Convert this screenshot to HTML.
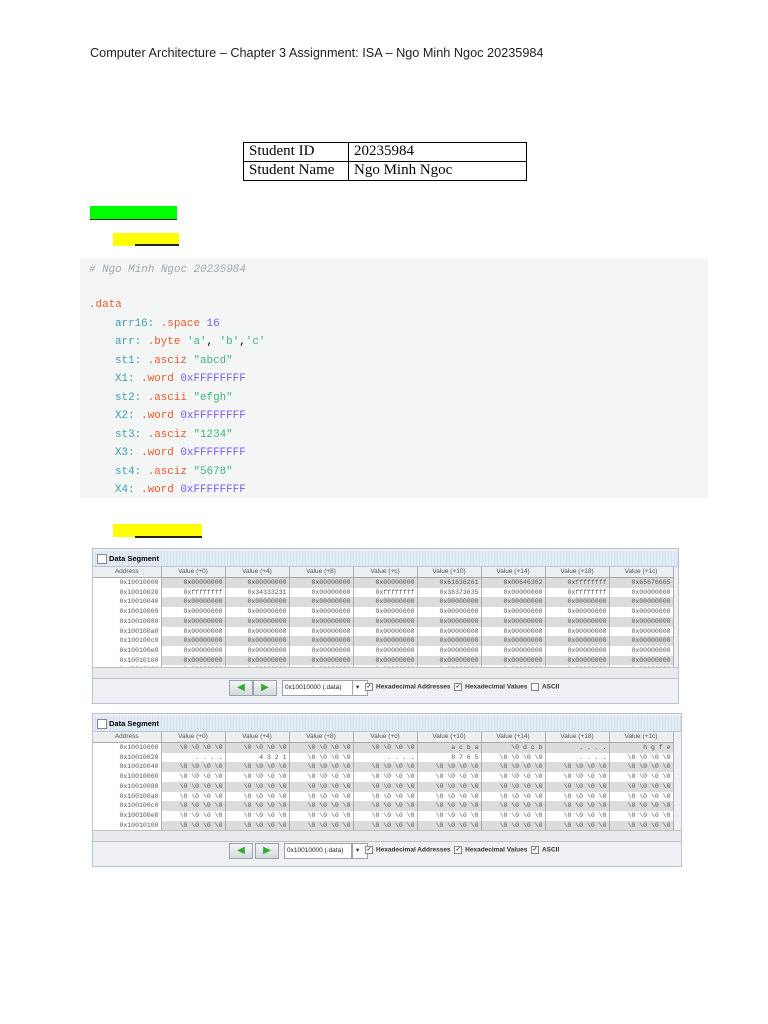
<!DOCTYPE html><html><head><meta charset="utf-8"><style>
body{margin:0;width:768px;height:1024px;background:#fff;position:relative;overflow:hidden;font-family:"Liberation Sans",sans-serif}
.a{position:absolute}
.code{left:80px;top:258px;width:628px;height:240px;background:#f4f5f5;font-family:"Liberation Mono",monospace;font-size:10.9px}
.code div{position:absolute;white-space:pre}
.o{color:#e8592a}.t{color:#3a9fb0}.n{color:#7a5af5}.s{color:#3fb27f}.c{color:#a0a8ae;font-style:italic}
.pn{border:1px solid #b8c2d0;background:#eef0f3;overflow:hidden}
.tb{position:absolute;left:0;right:0;top:2px;height:15px;background:repeating-linear-gradient(90deg,#e4ecf6 0 2px,#d4e0ee 2px 3px);border-bottom:1px solid #b8c8dc;font-size:7.5px;font-weight:bold;line-height:15px;padding-left:16px}
.tb:before{content:"";position:absolute;left:4px;top:3px;width:8px;height:8px;border:1px solid #888;background:#fff}
table{position:absolute;border-collapse:collapse;table-layout:fixed;font-family:"Liberation Mono",monospace;font-size:6.5px;color:#555}
td,th{height:9.7px;padding:0 2px;border-right:1px solid #b0b0b0;overflow:hidden;white-space:nowrap;text-align:right;line-height:9.7px}
th{font-family:"Liberation Sans",sans-serif;font-weight:normal;text-align:center;background:#eceef0;height:10px;border-bottom:1px solid #aaa;font-size:6.5px}
td.ad{background:#fff}
tr.g td{background:#dcdcdc}tr.g td.ad{background:#fff}
tr.w td{background:#fff}
.sb{position:absolute;left:0;right:0;height:10px;background:#e8eaee;border-top:1px solid #c0c0c0;border-bottom:1px solid #c0c0c0}
.ctl{position:absolute;font-size:6.5px;font-weight:bold;color:#333}
.btn{position:absolute;width:22px;height:14px;background:linear-gradient(#f4f6f8,#d4d8dc);border:1px solid #9aa4b0;color:#3a3;font-size:10px;text-align:center;line-height:14px}
.dd{position:absolute;height:14px;background:#fff;border:1px solid #9aa4b0;font-size:6.5px;line-height:14px;padding-left:2px;color:#222}
.cb{display:inline-block;width:6px;height:6px;border:1px solid #888;background:#fff;vertical-align:middle;margin-right:3px;font-size:6px;line-height:6px;text-align:center}
</style></head><body>
<div class="a" style="left:90px;top:46px;font-size:12.7px;color:#222">Computer Architecture – Chapter 3 Assignment: ISA – Ngo Minh Ngoc 20235984</div>
<div class="a" style="left:243px;top:142px;width:282px;height:37px;border:1px solid #000;font-family:'Liberation Serif',serif;font-size:15px">
<div class="a" style="left:0;top:18px;width:282px;border-top:1px solid #000"></div>
<div class="a" style="left:104px;top:0;height:37px;border-left:1px solid #000"></div>
<div class="a" style="left:5px;top:0">Student ID</div><div class="a" style="left:110px;top:0">20235984</div>
<div class="a" style="left:5px;top:19px">Student Name</div><div class="a" style="left:110px;top:19px">Ngo Minh Ngoc</div></div>
<div class="a" style="left:90px;top:206px;width:87px;height:13px;background:#00ff00;border-bottom:1px solid #333"></div>
<div class="a" style="left:113px;top:233px;width:66px;height:13px;background:#ffff00"></div>
<div class="a" style="left:135px;top:244px;width:44px;height:2px;background:#222"></div>
<div class="a code">
<div class="c" style="left:9px;top:6px"># Ngo Minh Ngoc 20235984</div>
<div class="o" style="left:9px;top:41px">.data</div>
<div style="left:35px;top:60px"><span class="t">arr16:</span> <span class="o">.space</span> <span class="n">16</span></div>
<div style="left:35px;top:78px"><span class="t">arr:</span> <span class="o">.byte</span> <span class="s">'a'</span>, <span class="s">'b'</span>,<span class="s">'c'</span></div>
<div style="left:35px;top:97px"><span class="t">st1:</span> <span class="o">.asciz</span> <span class="s">"abcd"</span></div>
<div style="left:35px;top:115px"><span class="t">X1:</span> <span class="o">.word</span> <span class="n">0xFFFFFFFF</span></div>
<div style="left:35px;top:134px"><span class="t">st2:</span> <span class="o">.ascii</span> <span class="s">"efgh"</span></div>
<div style="left:35px;top:152px"><span class="t">X2:</span> <span class="o">.word</span> <span class="n">0xFFFFFFFF</span></div>
<div style="left:35px;top:171px"><span class="t">st3:</span> <span class="o">.asciz</span> <span class="s">"1234"</span></div>
<div style="left:35px;top:189px"><span class="t">X3:</span> <span class="o">.word</span> <span class="n">0xFFFFFFFF</span></div>
<div style="left:35px;top:208px"><span class="t">st4:</span> <span class="o">.asciz</span> <span class="s">"5678"</span></div>
<div style="left:35px;top:226px"><span class="t">X4:</span> <span class="o">.word</span> <span class="n">0xFFFFFFFF</span></div>
</div>
<div class="a" style="left:113px;top:524px;width:89px;height:13px;background:#ffff00"></div>
<div class="a" style="left:135px;top:536px;width:67px;height:2px;background:#222"></div>

<div class="a pn" style="left:92px;top:548px;width:585px;height:154px">
<div class="tb">Data Segment</div>
<table style="left:0;top:18px;width:580px">
<colgroup><col style="width:68px"><col span="8" style="width:64px"></colgroup>
<tr><th>Address</th><th>Value (+0)</th><th>Value (+4)</th><th>Value (+8)</th><th>Value (+c)</th><th>Value (+10)</th><th>Value (+14)</th><th>Value (+18)</th><th>Value (+1c)</th></tr>
<tr class="g"><td class="ad">0x10010000</td><td>0x00000000</td><td>0x00000000</td><td>0x00000000</td><td>0x00000000</td><td>0x61636261</td><td>0x00646362</td><td>0xffffffff</td><td>0x65676665</td></tr>
<tr class="w"><td class="ad">0x10010020</td><td>0xffffffff</td><td>0x34333231</td><td>0x00000000</td><td>0xffffffff</td><td>0x38373635</td><td>0x00000000</td><td>0xffffffff</td><td>0x00000000</td></tr>
<tr class="g"><td class="ad">0x10010040</td><td>0x00000000</td><td>0x00000000</td><td>0x00000000</td><td>0x00000000</td><td>0x00000000</td><td>0x00000000</td><td>0x00000000</td><td>0x00000000</td></tr>
<tr class="w"><td class="ad">0x10010060</td><td>0x00000000</td><td>0x00000000</td><td>0x00000000</td><td>0x00000000</td><td>0x00000000</td><td>0x00000000</td><td>0x00000000</td><td>0x00000000</td></tr>
<tr class="g"><td class="ad">0x10010080</td><td>0x00000000</td><td>0x00000000</td><td>0x00000000</td><td>0x00000000</td><td>0x00000000</td><td>0x00000000</td><td>0x00000000</td><td>0x00000000</td></tr>
<tr class="w"><td class="ad">0x100100a0</td><td>0x00000000</td><td>0x00000000</td><td>0x00000000</td><td>0x00000000</td><td>0x00000000</td><td>0x00000000</td><td>0x00000000</td><td>0x00000000</td></tr>
<tr class="g"><td class="ad">0x100100c0</td><td>0x00000000</td><td>0x00000000</td><td>0x00000000</td><td>0x00000000</td><td>0x00000000</td><td>0x00000000</td><td>0x00000000</td><td>0x00000000</td></tr>
<tr class="w"><td class="ad">0x100100e0</td><td>0x00000000</td><td>0x00000000</td><td>0x00000000</td><td>0x00000000</td><td>0x00000000</td><td>0x00000000</td><td>0x00000000</td><td>0x00000000</td></tr>
<tr class="g"><td class="ad">0x10010100</td><td>0x00000000</td><td>0x00000000</td><td>0x00000000</td><td>0x00000000</td><td>0x00000000</td><td>0x00000000</td><td>0x00000000</td><td>0x00000000</td></tr>
<tr class="w"><td class="ad">0x10010120</td><td>0x00000000</td><td>0x00000000</td><td>0x00000000</td><td>0x00000000</td><td>0x00000000</td><td>0x00000000</td><td>0x00000000</td><td>0x00000000</td></tr>
</table>
<div class="sb" style="top:118px"></div>
<div class="btn" style="left:136px;top:131px">&#9664;</div><div class="btn" style="left:160px;top:131px">&#9654;</div>
<div class="dd" style="left:189px;top:131px;width:68px">0x10010000 (.data)</div>
<div class="dd" style="left:259px;top:131px;width:8px;padding:0 3px">&#9662;</div>
<div class="ctl" style="left:272px;top:134px"><span class="cb">✓</span>Hexadecimal Addresses &nbsp;<span class="cb">✓</span>Hexadecimal Values &nbsp;<span class="cb"></span>ASCII</div>
</div>

<div class="a pn" style="left:92px;top:713px;width:588px;height:152px">
<div class="tb">Data Segment</div>
<table style="left:0;top:18px;width:580px">
<colgroup><col style="width:68px"><col span="8" style="width:64px"></colgroup>
<tr><th>Address</th><th>Value (+0)</th><th>Value (+4)</th><th>Value (+8)</th><th>Value (+c)</th><th>Value (+10)</th><th>Value (+14)</th><th>Value (+18)</th><th>Value (+1c)</th></tr>
<tr class="g"><td class="ad">0x10010000</td><td>\0 \0 \0 \0</td><td>\0 \0 \0 \0</td><td>\0 \0 \0 \0</td><td>\0 \0 \0 \0</td><td>a c b a</td><td>\0 d c b</td><td>. . . .</td><td>h g f e</td></tr>
<tr class="w"><td class="ad">0x10010020</td><td>. . . .</td><td>4 3 2 1</td><td>\0 \0 \0 \0</td><td>. . . .</td><td>8 7 6 5</td><td>\0 \0 \0 \0</td><td>. . . .</td><td>\0 \0 \0 \0</td></tr>
<tr class="g"><td class="ad">0x10010040</td><td>\0 \0 \0 \0</td><td>\0 \0 \0 \0</td><td>\0 \0 \0 \0</td><td>\0 \0 \0 \0</td><td>\0 \0 \0 \0</td><td>\0 \0 \0 \0</td><td>\0 \0 \0 \0</td><td>\0 \0 \0 \0</td></tr>
<tr class="w"><td class="ad">0x10010060</td><td>\0 \0 \0 \0</td><td>\0 \0 \0 \0</td><td>\0 \0 \0 \0</td><td>\0 \0 \0 \0</td><td>\0 \0 \0 \0</td><td>\0 \0 \0 \0</td><td>\0 \0 \0 \0</td><td>\0 \0 \0 \0</td></tr>
<tr class="g"><td class="ad">0x10010080</td><td>\0 \0 \0 \0</td><td>\0 \0 \0 \0</td><td>\0 \0 \0 \0</td><td>\0 \0 \0 \0</td><td>\0 \0 \0 \0</td><td>\0 \0 \0 \0</td><td>\0 \0 \0 \0</td><td>\0 \0 \0 \0</td></tr>
<tr class="w"><td class="ad">0x100100a0</td><td>\0 \0 \0 \0</td><td>\0 \0 \0 \0</td><td>\0 \0 \0 \0</td><td>\0 \0 \0 \0</td><td>\0 \0 \0 \0</td><td>\0 \0 \0 \0</td><td>\0 \0 \0 \0</td><td>\0 \0 \0 \0</td></tr>
<tr class="g"><td class="ad">0x100100c0</td><td>\0 \0 \0 \0</td><td>\0 \0 \0 \0</td><td>\0 \0 \0 \0</td><td>\0 \0 \0 \0</td><td>\0 \0 \0 \0</td><td>\0 \0 \0 \0</td><td>\0 \0 \0 \0</td><td>\0 \0 \0 \0</td></tr>
<tr class="w"><td class="ad">0x100100e0</td><td>\0 \0 \0 \0</td><td>\0 \0 \0 \0</td><td>\0 \0 \0 \0</td><td>\0 \0 \0 \0</td><td>\0 \0 \0 \0</td><td>\0 \0 \0 \0</td><td>\0 \0 \0 \0</td><td>\0 \0 \0 \0</td></tr>
<tr class="g"><td class="ad">0x10010100</td><td>\0 \0 \0 \0</td><td>\0 \0 \0 \0</td><td>\0 \0 \0 \0</td><td>\0 \0 \0 \0</td><td>\0 \0 \0 \0</td><td>\0 \0 \0 \0</td><td>\0 \0 \0 \0</td><td>\0 \0 \0 \0</td></tr>
<tr class="w"><td class="ad">0x10010120</td><td>\0 \0 \0 \0</td><td>\0 \0 \0 \0</td><td>\0 \0 \0 \0</td><td>\0 \0 \0 \0</td><td>\0 \0 \0 \0</td><td>\0 \0 \0 \0</td><td>\0 \0 \0 \0</td><td>\0 \0 \0 \0</td></tr>
</table>
<div class="sb" style="top:116px"></div>
<div class="btn" style="left:136px;top:129px">&#9664;</div><div class="btn" style="left:162px;top:129px">&#9654;</div>
<div class="dd" style="left:191px;top:129px;width:64px">0x10010000 (.data)</div>
<div class="dd" style="left:259px;top:129px;width:8px;padding:0 3px">&#9662;</div>
<div class="ctl" style="left:272px;top:132px"><span class="cb">✓</span>Hexadecimal Addresses &nbsp;<span class="cb">✓</span>Hexadecimal Values &nbsp;<span class="cb">✓</span>ASCII</div>
</div>
</body></html>
